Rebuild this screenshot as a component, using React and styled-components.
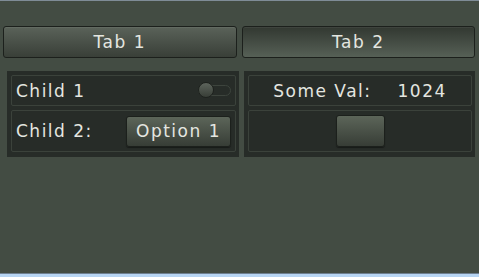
import React, { useState } from "react";
import styled, { createGlobalStyle } from "styled-components";

const GlobalStyle = createGlobalStyle`
    html, body {
        margin: 0;
        padding: 0;
        background: #434c43;
    }
    * {
        box-sizing: border-box;
    }
`;

const App = () => {
    const [tab, setTab] = useState(1);
    const [on, setOn] = useState(false);

    return (
        <>
            <GlobalStyle />
            <Frame>
                <Content>
                    <TabBar>
                        <Tab active={tab === 1} onClick={() => setTab(1)}>
                            Tab 1
                        </Tab>
                        <Tab active={tab === 2} pressed onClick={() => setTab(2)}>
                            Tab 2
                        </Tab>
                    </TabBar>
                    <Panels>
                        <Panel>
                            <Row>
                                <Label>Child 1</Label>
                                <Toggle onClick={() => setOn((c) => !c)}>
                                    <Knob on={on} />
                                </Toggle>
                            </Row>
                            <Row tall>
                                <Label>Child 2:</Label>
                                <Button wide>Option 1</Button>
                            </Row>
                        </Panel>
                        <Panel>
                            <Row centered>
                                <Label>Some Val:</Label>
                                <Label>1024</Label>
                            </Row>
                            <Row tall centered>
                                <Button />
                            </Row>
                        </Panel>
                    </Panels>
                </Content>
                <BottomEdge />
            </Frame>
        </>
    );
};

export default App;

const Frame = styled.div`
    width: 479px;
    height: 277px;
    display: flex;
    flex-direction: column;
    border-top: 1px solid #7f8c97;
    background: #434c43;
    font-family: "DejaVu Sans", Verdana, sans-serif;
    color: #e4e6e0;
`;

const Content = styled.div`
    flex: 1;
    padding: 25px 4px 0 3px;
    display: flex;
    flex-direction: column;
`;

const TabBar = styled.div`
    display: grid;
    grid-template-columns: 1fr 1fr;
    gap: 5px;
    height: 32px;
`;

const Tab = styled.div`
    border: 1px solid #1c201c;
    border-radius: 3px;
    display: flex;
    align-items: center;
    justify-content: center;
    font-size: 17px;
    letter-spacing: 1.5px;
    cursor: pointer;
    background: ${(props) =>
        props.pressed
            ? "linear-gradient(to bottom, #323831, #566056)"
            : "linear-gradient(to bottom, #5a6259, #393f38)"};
    box-shadow: inset 0 1px 0 rgba(255, 255, 255, 0.06);
`;

const Panels = styled.div`
    margin-top: 13px;
    padding-left: 4px;
    display: grid;
    grid-template-columns: 232px 231px;
    gap: 5px;
`;

const Panel = styled.div`
    background: #272c28;
    padding: 4px 3px 5px 4px;
    display: flex;
    flex-direction: column;
    gap: 4px;
`;

const Row = styled.div`
    height: ${(props) => (props.tall ? "42px" : "31px")};
    border: 1px solid #3b423b;
    border-radius: 2px;
    display: flex;
    align-items: center;
    justify-content: ${(props) => (props.centered ? "center" : "space-between")};
    gap: ${(props) => (props.centered ? "26px" : "0")};
    padding: 0 4px 0 4px;
`;

const Label = styled.span`
    font-size: 17px;
    letter-spacing: 1.5px;
    white-space: nowrap;
`;

const Toggle = styled.div`
    position: relative;
    width: 33px;
    height: 11px;
    border: 1px solid #3d443d;
    border-radius: 6px;
    cursor: pointer;
`;

const Knob = styled.div`
    position: absolute;
    top: -4px;
    left: ${(props) => (props.on ? "16px" : "-1px")};
    width: 16px;
    height: 16px;
    border-radius: 50%;
    border: 1px solid #1e221e;
    background: linear-gradient(to bottom, #5d645c, #383e37);
`;

const Button = styled.div`
    width: ${(props) => (props.wide ? "105px" : "49px")};
    height: ${(props) => (props.wide ? "31px" : "32px")};
    border: 1px solid #1c201c;
    border-radius: 3px;
    display: flex;
    align-items: center;
    justify-content: center;
    font-size: 17px;
    letter-spacing: 1.5px;
    background: linear-gradient(to bottom, #5c6559, #373d36);
    box-shadow: 0 1px 1px rgba(0, 0, 0, 0.4);
    cursor: pointer;
`;

const BottomEdge = styled.div`
    height: 4px;
    border-top: 1px solid #6f8091;
    background: #b7d5f3;
`;
